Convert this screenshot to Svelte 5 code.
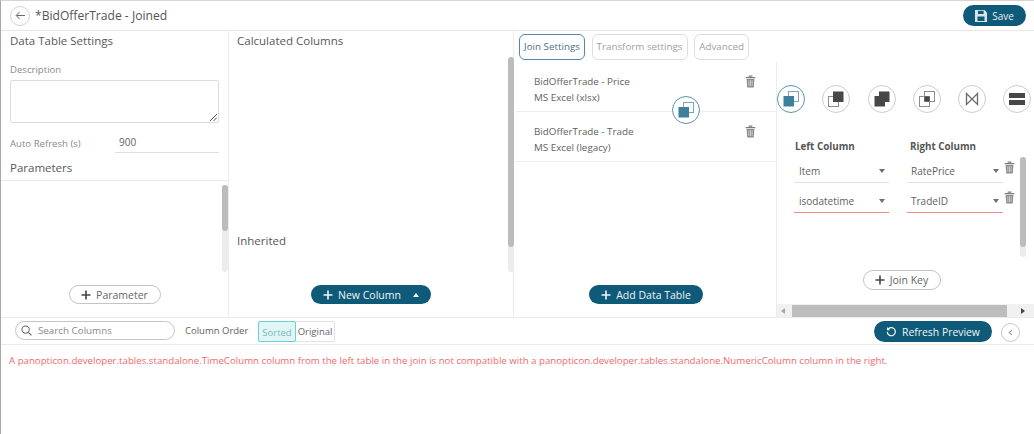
<script>
  const tables = [
    { name: 'BidOfferTrade - Price', source: 'MS Excel (xlsx)' },
    { name: 'BidOfferTrade - Trade', source: 'MS Excel (legacy)' }
  ];
  const joins = ['inner', 'left', 'outer', 'right', 'bowtie', 'union'];
  const keys = [
    { left: 'Item', right: 'RatePrice', bad: false },
    { left: 'isodatetime', right: 'TradeID', bad: true }
  ];
</script>

{#snippet trash(cls)}
  <svg class={cls} viewBox="0 0 12 14" width="11" height="13">
    <path d="M4 1.2h4M.8 2.8h10.4" stroke="#7a7a7a" stroke-width="1.3" fill="none" />
    <path d="M1.8 4.2h8.4l-.6 9.3H2.4z" fill="#8c8c8c" />
    <path d="M4.2 5.6v6.4M6 5.6v6.4M7.8 5.6v6.4" stroke="#e4e4e4" stroke-width=".8" />
  </svg>
{/snippet}

{#snippet plus()}
  <svg class="plus" viewBox="0 0 10 10" width="10" height="10">
    <path d="M5 .5v9M.5 5h9" stroke="currentColor" stroke-width="1.6" />
  </svg>
{/snippet}

{#snippet joinIcon(kind, active)}
  <span class="join" class:active>
    <svg viewBox="0 0 16 16" width="16" height="16">
      {#if kind === 'inner'}
        <rect x="5.5" y=".5" width="10" height="10" fill="none" stroke="#7ba6bb" />
        <rect x=".5" y="5" width="10.5" height="10.5" fill="#3e7f9e" />
      {:else if kind === 'left'}
        <rect x=".5" y="5.5" width="10" height="10" fill="#fff" stroke="#8d8d8d" />
        <rect x="5" y=".5" width="10.5" height="10.5" fill="#474747" />
      {:else if kind === 'outer'}
        <rect x="5" y=".5" width="10.5" height="10.5" fill="#474747" />
        <rect x=".5" y="5" width="10.5" height="10.5" fill="#474747" />
      {:else if kind === 'right'}
        <rect x=".5" y="5.5" width="10" height="10" fill="none" stroke="#8d8d8d" />
        <rect x="5.5" y=".5" width="10" height="10" fill="none" stroke="#8d8d8d" />
        <rect x="5.5" y="5.5" width="5" height="5" fill="#474747" />
      {:else if kind === 'bowtie'}
        <path d="M2.5 2.5v11L13.5 2.5v11z" fill="none" stroke="#6b6b6b" stroke-width="1.3" />
      {:else}
        <rect x="0" y="2" width="16" height="5" fill="#474747" />
        <rect x="0" y="9" width="16" height="5" fill="#474747" />
      {/if}
    </svg>
  </span>
{/snippet}

<div class="app">
  <header class="top">
    <div class="title-wrap">
      <button class="back" aria-label="Back">
        <svg viewBox="0 0 12 10" width="11" height="9">
          <path d="M11 5H1.5M5 1 1.2 5 5 9" fill="none" stroke="#666" stroke-width="1.1" />
        </svg>
      </button>
      <h1>*BidOfferTrade - Joined</h1>
    </div>
    <button class="pill save">
      <svg viewBox="0 0 12 12" width="12" height="12">
        <path d="M0 0h9.5L12 2.5V12H0z" fill="#d6e4ea" />
        <rect x="3" y="0.8" width="5.6" height="3.2" fill="#0f5a78" />
        <rect x="2.5" y="6.5" width="7" height="4.5" fill="#0f5a78" />
      </svg>
      Save
    </button>
  </header>

  <main class="panels">
    <section class="panel settings">
      <h2>Data Table Settings</h2>
      <label class="desc-label" for="desc">Description</label>
      <div class="textarea" id="desc">
        <svg class="grip" viewBox="0 0 7 7" width="7" height="7">
          <path d="M0 7 7 0M3.5 7 7 3.5" stroke="#555" stroke-width="1" />
        </svg>
      </div>
      <div class="refresh">
        <span class="muted">Auto Refresh (s)</span>
        <span class="refresh-val">900</span>
      </div>
      <h2 class="params">Parameters</h2>
      <div class="scroll s1"><i></i></div>
      <div class="foot"><button class="pill ghost">{@render plus()}Parameter</button></div>
    </section>

    <section class="panel calc">
      <h2>Calculated Columns</h2>
      <h2 class="inherited">Inherited</h2>
      <div class="foot"><button class="pill solid new">{@render plus()}New Column<span class="caret"></span></button></div>
    </section>

    <section class="panel tables">
      <div class="tabs">
        <span class="tab on">Join Settings</span>
        <span class="tab">Transform settings</span>
        <span class="tab">Advanced</span>
      </div>
      <div class="table-list">
        {#each tables as t}
          <div class="table-row">
            <div>
              <div>{t.name}</div>
              <div>{t.source}</div>
            </div>
            {@render trash('row-trash')}
          </div>
        {/each}
        <div class="float-join">{@render joinIcon('inner', true)}</div>
        <div class="scroll s2"><i></i></div>
      </div>
      <div class="foot"><button class="pill solid add">{@render plus()}Add Data Table</button></div>
    </section>

    <section class="panel keys">
      <div class="join-row">
        {#each joins as j, i}
          {@render joinIcon(j, i === 0)}
        {/each}
      </div>
      <div class="key-grid">
        <b class="bl">Left Column</b><b class="br">Right Column</b>
        {#each keys as k}
          <div class="select" class:bad={k.bad}>{k.left}<span class="arrow"></span></div>
          <div class="key-right">
            <div class="select" class:bad={k.bad}>{k.right}<span class="arrow"></span></div>
            {@render trash('key-trash')}
          </div>
        {/each}
      </div>
      <div class="scroll s3"><i></i></div>
      <div class="foot key-foot"><button class="pill ghost">{@render plus()}Join Key</button></div>
      <div class="hbar">
        <span class="harrow l"></span>
        <span class="hthumb"></span>
        <span class="harrow r"></span>
      </div>
    </section>
  </main>

  <div class="toolbar">
    <div class="search">
      <svg viewBox="0 0 12 12" width="11" height="11">
        <circle cx="5" cy="5" r="4" fill="none" stroke="#666" stroke-width="1.1" />
        <path d="m8 8 3.4 3.4" stroke="#666" stroke-width="1.2" />
      </svg>
      <span>Search Columns</span>
    </div>
    <span class="order">Column Order</span>
    <div class="seg"><span class="seg-on">Sorted</span><span class="seg-off">Original</span></div>
    <button class="pill solid refreshbtn">
      <svg viewBox="0 0 12 12" width="11" height="11">
        <path d="M2.6 3.2A4.4 4.4 0 1 1 1.4 6.4" fill="none" stroke="#fff" stroke-width="1.3" />
        <path d="M1 1.2v3.4h3.4z" fill="#fff" />
      </svg>
      Refresh Preview
    </button>
    <button class="collapse" aria-label="Collapse">
      <svg viewBox="0 0 6 8" width="5" height="7"><path d="M4.5 1 1.5 4l3 3" fill="none" stroke="#555" stroke-width="1.1" /></svg>
    </button>
  </div>

  <p class="error">A panopticon.developer.tables.standalone.TimeColumn column from the left table in the join is not compatible with a panopticon.developer.tables.standalone.NumericColumn column in the right.</p>
</div>

<style>
  :global(body) { margin: 0; background: #fff; }
  .app {
    width: 1034px; height: 434px; box-sizing: border-box; overflow: hidden;
    border-top: 1px solid #d4d4d4; border-left: 1px solid #a8a8a8;
    font-family: "Open Sans", sans-serif; font-size: 10px; color: #5f5f5f;
    background: #fff; display: flex; flex-direction: column;
  }
  button { font-family: inherit; cursor: pointer; padding: 0; }
  h1, h2, p { margin: 0; font-weight: 400; }

  .top {
    height: 29px; flex: none; display: flex; align-items: center; justify-content: space-between;
    padding: 0 8px 0 9px; border-bottom: 1px solid #e6e6e6;
  }
  .title-wrap { display: flex; align-items: center; gap: 5px; }
  .back {
    width: 20px; height: 20px; border-radius: 50%; border: 1px solid #d2d2d2; background: #fff;
    display: flex; align-items: center; justify-content: center;
  }
  h1 { font-size: 12.1px; color: #555; }

  .pill {
    border-radius: 12px; display: inline-flex; align-items: center; justify-content: center;
    font-size: 10.5px; gap: 5px; box-sizing: border-box;
  }
  .save { width: 63px; height: 21px; border: 0; background: #0e5a78; color: #e8f0f3; font-size: 10px; font-weight: 500; }
  .solid { background: #0e5a78; color: #f0f5f7; border: 0; height: 19px; }
  .ghost { background: #fff; border: 1px solid #c4c4c4; color: #666; height: 19px; }
  .plus { flex: none; }
  .ghost .plus { color: #444; }

  .panels { height: 286px; flex: none; display: flex; border-bottom: 1px solid #ebebeb; }
  .panel { position: relative; box-sizing: border-box; display: flex; flex-direction: column; }
  h2 { font-size: 11.5px; color: #585858; line-height: 16px; }
  .foot { position: absolute; left: 0; right: 0; bottom: 13px; display: flex; justify-content: center; }

  .settings { width: 228px; padding: 2px 8px 0 9px; border-right: 1px solid #ececec; }
  .desc-label { color: #8c8c8c; font-size: 9.6px; line-height: 14px; margin-top: 14px; }
  .textarea {
    position: relative; width: 209px; height: 43px; box-sizing: border-box; margin-top: 3px;
    border: 1px solid #dcdcdc; border-radius: 2px;
  }
  .grip { position: absolute; right: 1px; bottom: 1px; }
  .refresh { display: flex; align-items: center; margin-top: 10px; height: 20px; width: 209px; }
  .muted { color: #8a8a8a; width: 105px; font-size: 9.6px; }
  .refresh-val {
    flex: 1; height: 20px; line-height: 18px; padding-left: 4px; box-sizing: border-box;
    border-bottom: 1px solid #dedede;
  }
  .params { margin: 7px -8px 0 -9px; padding: 0 0 4px 9px; border-bottom: 1px solid #e8e8e8; }

  .scroll { position: absolute; background: #ececec; border-radius: 3px; width: 6px; }
  .scroll i { display: block; background: #bcbcbc; border-radius: 3px; width: 100%; }
  .s1 { left: 221px; top: 154px; height: 87px; }
  .s1 i { height: 46px; }
  .s2 { left: -6px; top: -5px; height: 215px; }
  .s2 i { height: 190px; }
  .s3 { left: 243px; top: 126px; height: 100px; }
  .s3 i { height: 90px; }

  .calc { width: 285px; padding: 2px 0 0 8px; border-right: 1px solid #ececec; }
  .inherited { margin-top: 184px; }

  .tables { width: 263px; }
  .tabs { display: flex; gap: 6.7px; padding: 3px 0 0 5px; }
  .tab {
    height: 26px; line-height: 24px; box-sizing: border-box; padding: 0 4px; border: 1px solid #dedede;
    border-radius: 6px; color: #a0a0a0; font-size: 9.8px;
  }
  .tab.on { border-color: #4f8ba6; color: #4d6f80; }
  .table-list { position: relative; margin-top: 2px; flex: 1; border-right: 1px solid #ececec; }
  .table-row {
    display: flex; justify-content: space-between; height: 50px; box-sizing: border-box;
    padding: 12px 20px 0 18px; margin-left: 2px; border-bottom: 1px solid #ededed;
    line-height: 16px; font-size: 9.8px; color: #626262;
  }
  .row-trash { margin-top: 1px; }
  .float-join { position: absolute; left: 157.5px; top: 34px; }

  .join {
    flex: none; width: 28px; height: 28px; box-sizing: border-box; border-radius: 50%; border: 1px solid #c8cfd2;
    background: #fff; display: flex; align-items: center; justify-content: center;
  }
  .join.active { border-color: #5a93ac; }

  .keys { flex: 1; overflow: hidden; }
  .join-row { display: flex; gap: 17.3px; padding: 54px 0 0 0; }
  .key-grid {
    display: grid; grid-template-columns: 95px 115px; column-gap: 18px; padding-left: 17px; margin-top: 27px;
    align-items: start;
  }
  .key-grid b { font-size: 9.8px; font-weight: 700; color: #555; line-height: 14px; margin-bottom: 7px; }
  .bl { padding-left: 1px; }
  .br { padding-left: 3px; }
  .select {
    position: relative; box-sizing: border-box; height: 22px; line-height: 20px; padding-left: 5px; width: 95px;
    border-bottom: 1px solid #e2e2e2; margin-bottom: 8px; color: #626262;
  }
  .select.bad { border-bottom-color: #ef8c8c; }
  .arrow {
    position: absolute; right: 4.5px; top: 8px; width: 0; height: 0;
    border-left: 3.5px solid transparent; border-right: 3.5px solid transparent; border-top: 4px solid #6f6f6f;
  }
  .key-right { display: flex; gap: 1px; width: 115px; }
  .key-right .select { flex: none; width: 96px; padding-left: 4px; }
  .key-trash { margin-top: 0; }
  .key-foot { bottom: 27px; }
  .key-foot .ghost { width: 78px; margin-right: 8px; height: 20px; }
  .hbar {
    position: absolute; left: 0; right: 0; bottom: 0; height: 13px; background: #f1f1f1;
    display: flex; align-items: center;
  }
  .hthumb { height: 12px; width: 215px; background: #bdbdbd; margin: 0 14px 0 7px; }
  .harrow { width: 0; height: 0; border-top: 3.5px solid transparent; border-bottom: 3.5px solid transparent; }
  .harrow.l { margin-left: 4px; border-right: 4px solid #a5a5a5; }
  .harrow.r { border-left: 4px solid #444; }

  .settings .foot .ghost { width: 92px; }
  .new { width: 120px; }
  .add { width: 114px; margin-left: 1px; }
  .caret {
    width: 0; height: 0; margin-left: 7px; border-left: 3.5px solid transparent; border-right: 3.5px solid transparent;
    border-bottom: 4px solid #fff;
  }

  .toolbar {
    height: 23px; flex: none; display: flex; align-items: flex-start; padding: 3px 14px 0 14px;
    border-bottom: 1px solid #ececec;
  }
  .search {
    width: 160px; height: 19px; box-sizing: border-box; border: 1px solid #c5c5c5; border-radius: 10px;
    display: flex; align-items: center; gap: 6px; padding-left: 5px; color: #8a8a8a; font-size: 9.8px;
  }
  .order { margin: 3px 0 0 10px; font-size: 9.5px; line-height: 14px; }
  .seg {
    margin-left: 10px; height: 21px; display: flex; border: 1px solid #e2e2e2; border-radius: 2px;
    line-height: 19px; font-size: 9.5px; box-sizing: border-box;
  }
  .seg-on { margin: -1px 0 -1px -1px; padding: 1px 3px; border: 1px solid #68d2d6; background: #e3f6f6; color: #77b9bc; border-radius: 2px; }
  .seg-off { padding: 0 2px; color: #666; }
  .refreshbtn { margin-left: auto; width: 118px; height: 21px; font-size: 10.4px; font-weight: 500; }
  .collapse {
    margin: 2px 0 0 9px; width: 19px; height: 19px; border-radius: 50%; border: 1px solid #c8c8c8; background: #fff;
    display: flex; align-items: center; justify-content: center;
  }
  .error { color: #ee6a6a; font-size: 9.68px; line-height: 14px; padding: 9px 0 0 8px; white-space: nowrap; }
</style>
